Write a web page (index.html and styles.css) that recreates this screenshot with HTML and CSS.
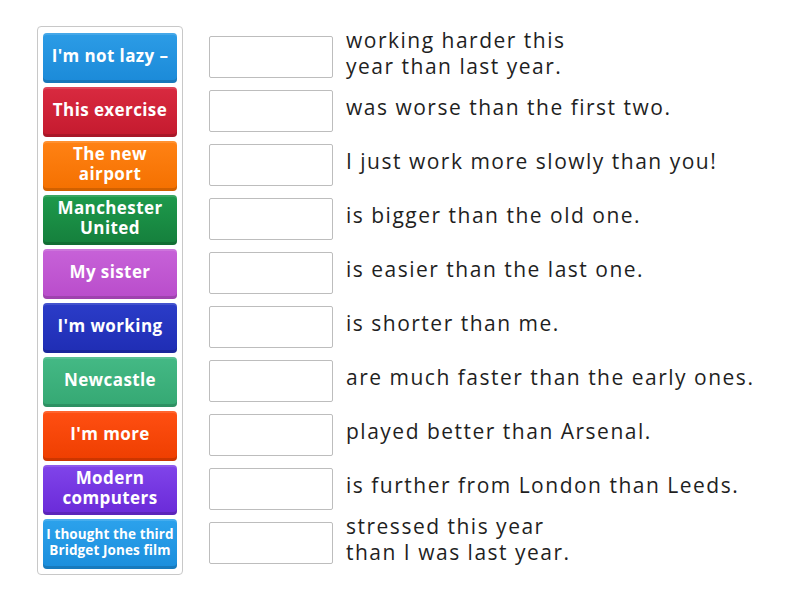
FILE: index.html
```html
<!DOCTYPE html>
<html>
<head>
<meta charset="utf-8">
<link rel="stylesheet" href="styles.css">
</head>
<body>
<div class="page">
  <div class="bank">
    <div class="card c1">I'm not lazy –</div>
    <div class="card c2">This exercise</div>
    <div class="card c3">The new<br>airport</div>
    <div class="card c4">Manchester<br>United</div>
    <div class="card c5">My sister</div>
    <div class="card c6">I'm working</div>
    <div class="card c7">Newcastle</div>
    <div class="card c8">I'm more</div>
    <div class="card c9">Modern<br>computers</div>
    <div class="card c10 small">I thought the third<br>Bridget Jones film</div>
  </div>
  <div class="rows">
    <div class="row"><div class="slot"></div><div class="text">working harder this<br>year than last year.</div></div>
    <div class="row"><div class="slot"></div><div class="text">was worse than the first two.</div></div>
    <div class="row"><div class="slot"></div><div class="text">I just work more slowly than you!</div></div>
    <div class="row"><div class="slot"></div><div class="text">is bigger than the old one.</div></div>
    <div class="row"><div class="slot"></div><div class="text">is easier than the last one.</div></div>
    <div class="row"><div class="slot"></div><div class="text">is shorter than me.</div></div>
    <div class="row"><div class="slot"></div><div class="text">are much faster than the early ones.</div></div>
    <div class="row"><div class="slot"></div><div class="text">played better than Arsenal.</div></div>
    <div class="row"><div class="slot"></div><div class="text">is further from London than Leeds.</div></div>
    <div class="row"><div class="slot"></div><div class="text">stressed this year<br>than I was last year.</div></div>
  </div>
</div>
</body>
</html>
```

FILE: styles.css
```css
html, body {
  margin: 0;
  padding: 0;
  background: #fff;
}
body {
  font-family: "Open Sans", "Noto Sans", sans-serif;
}
.page {
  display: flex;
  align-items: flex-start;
  padding: 26px 0 0 37px;
}
.bank {
  width: 134px;
  padding: 6px 5px 5px 5px;
  border: 1px solid #c8c8c8;
  border-radius: 4px;
  display: flex;
  flex-direction: column;
  gap: 4px;
}
.card {
  height: 50px;
  box-sizing: border-box;
  border-radius: 4px;
  color: #fff;
  font-weight: 700;
  font-size: 17px;
  letter-spacing: 0.4px;
  line-height: 20px;
  display: flex;
  align-items: center;
  justify-content: center;
  text-align: center;
  padding-bottom: 4px;
  box-shadow: inset 0 -3px 0 rgba(0,0,0,0.14), inset 0 2px 0 rgba(255,255,255,0.12);
  white-space: nowrap;
}
.card.small {
  font-size: 13.5px;
  line-height: 16px;
  letter-spacing: 0.1px;
}
.c1 { background: linear-gradient(#2c9ce6, #1b8ad8); }
.c2 { background: linear-gradient(#d92a40, #c41a2e); }
.c3 { background: linear-gradient(#ff8214, #f47000); }
.c4 { background: linear-gradient(#1e9a4c, #157f3c); }
.c5 { background: linear-gradient(#c762d8, #b94ccb); }
.c6 { background: linear-gradient(#2b3cc8, #1f2db4); }
.c7 { background: linear-gradient(#44b985, #35a873); }
.c8 { background: linear-gradient(#ff4f12, #ee3e00); }
.c9 { background: linear-gradient(#8044ea, #6a2ad8); }
.c10 { background: linear-gradient(#2ca2ec, #1b8edc); }
.rows {
  margin-left: 26px;
  padding-top: 6px;
  display: flex;
  flex-direction: column;
  gap: 4px;
}
.row {
  height: 50px;
  display: flex;
  align-items: center;
}
.slot {
  width: 122px;
  height: 40px;
  border: 1px solid #bdbdbd;
  border-radius: 2px;
  background: #fff;
  flex: none;
}
.text {
  margin-left: 13px;
  margin-bottom: 8px;
  font-size: 21px;
  letter-spacing: 1.5px;
  line-height: 26px;
  color: #1f1f1f;
  white-space: nowrap;
}
```
